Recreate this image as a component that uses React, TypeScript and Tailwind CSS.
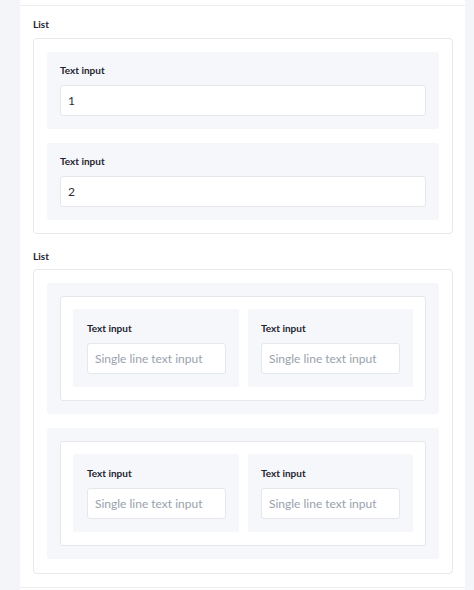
import React from "react";

const font = { fontFamily: "Lato, 'Noto Sans', sans-serif" };

function Field({ value, placeholder }: { value?: string; placeholder?: string }) {
  return (
    <div className="flex flex-col">
      <div className="h-[14px] text-[10px] leading-[14px] font-bold text-[#1f2430]">Text input</div>
      <div className="mt-[8px] h-[31px] rounded-[3px] border border-[#e4e7ec] bg-white px-[7px] flex items-center">
        {value !== undefined ? (
          <span className="text-[12px] text-[#2a2f3a]">{value}</span>
        ) : (
          <span className="text-[12px] text-[#9aa1ad]">{placeholder}</span>
        )}
      </div>
    </div>
  );
}

function ListLabel() {
  return <div className="h-[14px] text-[10px] leading-[14px] font-bold text-[#1f2430]">List</div>;
}

function Row() {
  return (
    <div className="rounded-[3px] bg-[#f6f7fa] p-[13px]">
      <div className="rounded-[3px] border border-[#e4e7ec] bg-white px-[12px] pt-[12px] pb-[13px]">
        <div className="flex gap-[9px]">
          <div className="w-[166px] rounded-[2px] bg-[#f6f7fa] pl-[14px] pr-[13px] pt-[12px] pb-[13px]">
            <Field placeholder="Single line text input" />
          </div>
          <div className="w-[165px] rounded-[2px] bg-[#f6f7fa] pl-[13px] pr-[13px] pt-[12px] pb-[13px]">
            <Field placeholder="Single line text input" />
          </div>
        </div>
      </div>
    </div>
  );
}

export default function App() {
  return (
    <div className="flex h-[590px] w-[474px] overflow-hidden bg-[#f4f5f8]" style={font}>
      <div className="w-[20px] shrink-0" />
      <div className="w-[445px] shrink-0 bg-white">
        <div className="h-[5px]" />
        <div className="border-t border-[#eceef2] px-[13px] pt-[11px]">
          <ListLabel />
          <div className="mt-[7px] w-[420px] rounded-[4px] border border-[#e6e8ec] p-[13px] flex flex-col gap-[14px]">
            <div className="rounded-[3px] bg-[#f6f7fa] px-[13px] pt-[11px] pb-[13px]">
              <Field value="1" />
            </div>
            <div className="rounded-[3px] bg-[#f6f7fa] px-[13px] pt-[11px] pb-[13px]">
              <Field value="2" />
            </div>
          </div>
          <div className="mt-[15px]">
            <ListLabel />
          </div>
          <div className="mt-[6px] w-[420px] rounded-[4px] border border-[#e6e8ec] px-[13px] pt-[13px] pb-[14px] flex flex-col gap-[14px]">
            <Row />
            <Row />
          </div>
        </div>
        <div className="mt-[13px] border-t border-[#eceef2]" />
      </div>
      <div className="flex-1" />
    </div>
  );
}
